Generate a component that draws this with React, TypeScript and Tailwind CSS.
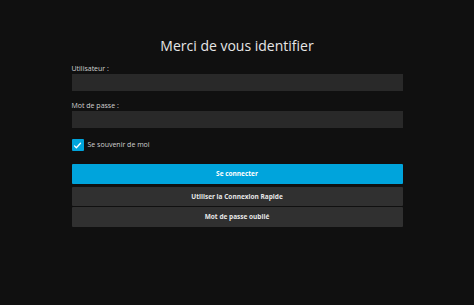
import React from 'react';

const font = { fontFamily: '"Open Sans", "Noto Sans", sans-serif' };

const Field: React.FC<{ label: string; type?: string }> = ({ label, type = 'text' }) => (
  <div className="flex flex-col">
    <label className="text-[7px] leading-[11px] text-[#d0d0d0]">{label}</label>
    <input type={type} className="h-[17px] w-full bg-[#292929] outline-none border-0" />
  </div>
);

export default function App() {
  return (
    <div className="w-[474px] h-[305px] bg-[#101010] overflow-hidden" style={font}>
      <div className="w-[331px] mx-auto pt-[36px] flex flex-col">
        <h1 className="text-center text-[14px] leading-[20px] text-[#e6e6e6] mb-[7px]">
          Merci de vous identifier
        </h1>
        <div className="flex flex-col gap-[9px]">
          <Field label="Utilisateur :" />
          <Field label="Mot de passe :" type="password" />
        </div>
        <div className="flex items-center gap-[4px] mt-[11px]">
          <span className="w-[12px] h-[12px] bg-[#00a4dc] rounded-[1px] flex items-center justify-center">
            <svg width="9" height="9" viewBox="0 0 24 24" fill="none" stroke="#fff" strokeWidth="3.5" strokeLinecap="round" strokeLinejoin="round">
              <path d="M4 13l5 5L20 6" />
            </svg>
          </span>
          <span className="text-[7px] text-[#d0d0d0]">Se souvenir de moi</span>
        </div>
        <div className="flex flex-col mt-[13px]">
          <button className="h-[20px] bg-[#00a4dc] text-white text-[6.5px] font-bold rounded-[1px]">Se connecter</button>
          <button className="h-[19px] mt-[3px] bg-[#303030] text-[#e8e8e8] text-[6.5px] font-bold rounded-[1px]">
            Utiliser la Connexion Rapide
          </button>
          <button className="h-[20px] mt-[1px] bg-[#303030] text-[#e8e8e8] text-[6.5px] font-bold rounded-[1px]">
            Mot de passe oublié
          </button>
        </div>
      </div>
    </div>
  );
}
